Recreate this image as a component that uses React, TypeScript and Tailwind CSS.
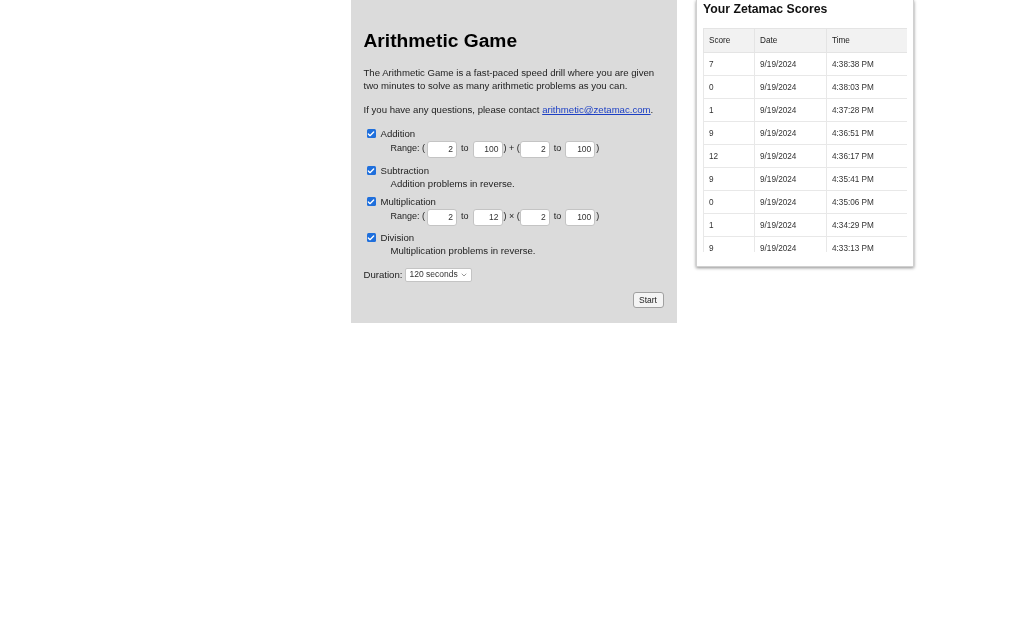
import { Check, ChevronDown } from "lucide-react"

const scores = [
  ["7", "9/19/2024", "4:38:38 PM"],
  ["0", "9/19/2024", "4:38:03 PM"],
  ["1", "9/19/2024", "4:37:28 PM"],
  ["9", "9/19/2024", "4:36:51 PM"],
  ["12", "9/19/2024", "4:36:17 PM"],
  ["9", "9/19/2024", "4:35:41 PM"],
  ["0", "9/19/2024", "4:35:06 PM"],
  ["1", "9/19/2024", "4:34:29 PM"],
  ["9", "9/19/2024", "4:33:13 PM"],
]

function NumBox({ value }: { value: string }) {
  return (
    <span className="w-[30px] h-[17px] bg-white border border-[#c4c4c4] rounded-[3px] flex items-center justify-end pr-[3px] text-[8.5px] text-[#333]">
      {value}
    </span>
  )
}

function Range({ a, b, c, d, op }: { a: string; b: string; c: string; d: string; op: string }) {
  return (
    <div className="flex items-center h-[17px] ml-[27px] text-[9px] text-[#222]">
      <span className="mr-[2px]">Range: (</span>
      <NumBox value={a} />
      <span className="mx-[4px]">to</span>
      <NumBox value={b} />
      <span className="ml-[1px]">) {op} (</span>
      <NumBox value={c} />
      <span className="mx-[4px]">to</span>
      <NumBox value={d} />
      <span className="ml-[1px]">)</span>
    </div>
  )
}

function Option({ label, children, className }: { label: string; children: React.ReactNode; className: string }) {
  return (
    <div className={className}>
      <div className="flex items-center h-[12px] text-[9.6px] text-[#222]">
        <span className="w-[9px] h-[9px] ml-[3px] mr-[5px] -mt-[2px] bg-[#1f6fdc] rounded-[1.5px] flex items-center justify-center">
          <Check size={8} strokeWidth={4} className="text-white" />
        </span>
        {label}
      </div>
      {children}
    </div>
  )
}

export default function App() {
  return (
    <div className="h-[638px] bg-white overflow-hidden flex items-start gap-[19px] pl-[351px] blur-[0.35px] font-['Liberation_Sans',Arial,sans-serif]">
      <div className="w-[326px] h-[323px] bg-[#dbdbdb] px-[12.5px] pt-[29px]">
        <h1 className="text-[19.2px] leading-[24px] font-bold text-black">Arithmetic Game</h1>
        <p className="mt-[14px] text-[9.6px] leading-[12.5px] text-[#222]">
          The Arithmetic Game is a fast-paced speed drill where you are given
          <br />
          two minutes to solve as many arithmetic problems as you can.
        </p>
        <p className="mt-[12px] text-[9.6px] leading-[12.5px] text-[#222]">
          If you have any questions, please contact{" "}
          <span className="text-[#1c3fc4] underline">arithmetic@zetamac.com</span>.
        </p>
        <Option label="Addition" className="mt-[12px]">
          <Range a="2" b="100" c="2" d="100" op="+" />
        </Option>
        <Option label="Subtraction" className="mt-[8px]">
          <div className="ml-[27px] h-[12px] leading-[12px] text-[9.6px] text-[#222]">Addition problems in reverse.</div>
        </Option>
        <Option label="Multiplication" className="mt-[7px]">
          <Range a="2" b="12" c="2" d="100" op="×" />
        </Option>
        <Option label="Division" className="mt-[7px]">
          <div className="ml-[27px] h-[12px] leading-[12px] text-[9.6px] text-[#222]">Multiplication problems in reverse.</div>
        </Option>
        <div className="mt-[11px] flex items-center text-[9.6px] text-[#222]">
          <span>Duration:</span>
          <span className="ml-[3px] w-[67px] h-[14px] bg-white border border-[#c4c4c4] rounded-[2px] flex items-center justify-between px-[3px] text-[8.5px] text-[#333]">
            120 seconds
            <ChevronDown size={8} strokeWidth={1.5} />
          </span>
        </div>
        <div className="mt-[10px] flex justify-end">
          <button className="w-[31px] h-[16px] mr-[1px] bg-[#f4f4f4] border border-[#a0a0a0] rounded-[3px] text-[8.5px] text-[#222] flex items-center justify-center">
            Start
          </button>
        </div>
      </div>

      <div className="w-[218px] h-[267px] bg-white border border-[#d0d0d0] border-t-0 shadow-[0_1px_3px_rgba(0,0,0,0.45)] px-[6px]">
        <h2 className="text-[12.25px] leading-[18px] font-bold text-[#111]">Your Zetamac Scores</h2>
        <div className="mt-[10px] h-[224px] overflow-hidden">
          <table className="w-[205px] table-fixed border-collapse text-[8.2px] text-[#333]">
            <thead>
              <tr className="h-[24px] bg-[#f2f2f2] text-[#222]">
                <th className="w-[51px] border border-[#e4e4e4] pl-[5px] pt-[2px] text-left font-normal">Score</th>
                <th className="w-[72px] border border-[#e4e4e4] pl-[5px] pt-[2px] text-left font-normal">Date</th>
                <th className="border border-[#e4e4e4] pl-[5px] pt-[2px] text-left font-normal">Time</th>
              </tr>
            </thead>
            <tbody>
              {scores.map((row, i) => (
                <tr key={i} className="h-[23px]">
                  {row.map((cell, j) => (
                    <td key={j} className="border border-[#e8e8e8] pl-[5px] pt-[2px]">{cell}</td>
                  ))}
                </tr>
              ))}
            </tbody>
          </table>
        </div>
      </div>
    </div>
  )
}
